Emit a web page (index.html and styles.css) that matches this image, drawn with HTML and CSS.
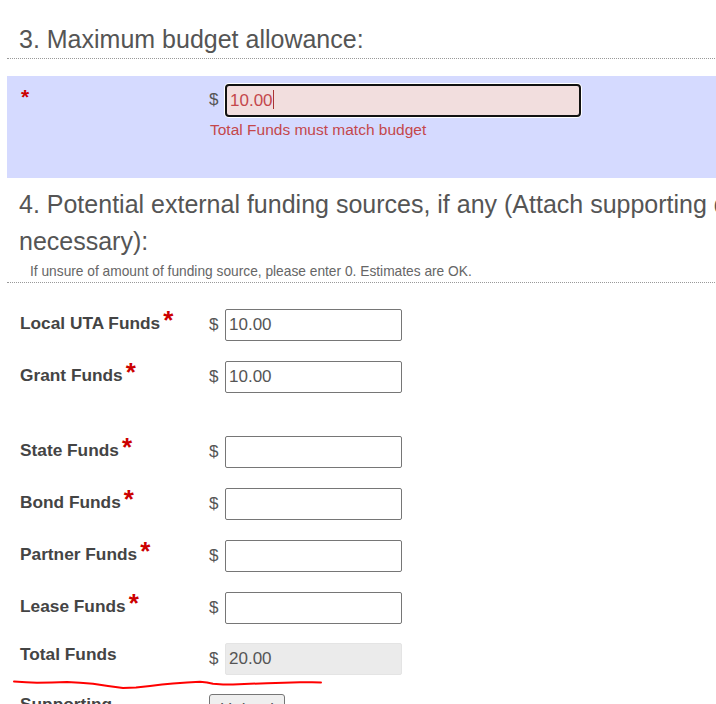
FILE: index.html
```html
<!DOCTYPE html>
<html lang="en">
<head>
<meta charset="utf-8">
<title>Budget</title>
<link rel="stylesheet" href="styles.css">
</head>
<body>
<div class="page">
  <h2 class="section-title">3. Maximum budget allowance:</h2>

  <div class="budget-panel">
    <div class="row">
      <div class="label label-req"><span class="req-big">*</span></div>
      <span class="currency">$</span>
      <div class="field-wrap">
        <input class="amount amount-wide is-invalid" type="text" value="10.00">
        <span class="caret"></span>
      </div>
      <div class="error-msg">Total Funds must match budget</div>
    </div>
  </div>

  <div class="section-head">
    <h2 class="section-title plain">4. Potential external funding sources, if any (Attach supporting documentation if<br>necessary):</h2>
    <p class="note">If unsure of amount of funding source, please enter 0. Estimates are OK.</p>
  </div>

  <div class="fund-rows">
    <div class="row">
      <label class="label">Local UTA Funds<span class="req">*</span></label>
      <span class="currency">$</span>
      <input class="amount" type="text" value="10.00">
    </div>
    <div class="row">
      <label class="label">Grant Funds<span class="req">*</span></label>
      <span class="currency">$</span>
      <input class="amount" type="text" value="10.00">
    </div>
    <div class="row group-start">
      <label class="label">State Funds<span class="req">*</span></label>
      <span class="currency">$</span>
      <input class="amount" type="text" value="">
    </div>
    <div class="row">
      <label class="label">Bond Funds<span class="req">*</span></label>
      <span class="currency">$</span>
      <input class="amount" type="text" value="">
    </div>
    <div class="row">
      <label class="label">Partner Funds<span class="req">*</span></label>
      <span class="currency">$</span>
      <input class="amount" type="text" value="">
    </div>
    <div class="row tight">
      <label class="label">Lease Funds<span class="req">*</span></label>
      <span class="currency">$</span>
      <input class="amount" type="text" value="">
    </div>
    <div class="row tight">
      <label class="label label-total">Total Funds</label>
      <span class="currency">$</span>
      <input class="amount amount-total" type="text" value="20.00" readonly>
    </div>
    <div class="row">
      <label class="label label-upload">Supporting Documentation</label>
      <button class="upload-btn" type="button">Upload</button>
    </div>
  </div>

  <svg class="squiggle" width="330" height="16" viewBox="0 0 330 16">
    <polyline points="14,5.5 26,6.2 37,6.8 52,6.4 67,6 80,6.8 93,7.8 108,10 123,12 136,11.5 150,10 162,8.5 173,7.4 187,6.4 200,5.8 207,6.5 213,7.8 223,8.4 233,8.4 250,7.8 267,7.3 284,6.8 300,6.3 312,6.2 321,6.4" fill="none" stroke="#f00" stroke-width="2" stroke-linecap="round" stroke-linejoin="round"/>
  </svg>
</div>
</body>
</html>
```

FILE: styles.css
```css
html, body {
  margin: 0;
  padding: 0;
  overflow: hidden;
  background: #fff;
}

body {
  font-family: "Liberation Sans", Arial, sans-serif;
  color: #444;
}

.page {
  position: relative;
  width: 1200px;
  padding: 21px 0 0 7px;
}

.section-title {
  margin: 0;
  padding-left: 12px;
  font-size: 25px;
  font-weight: normal;
  line-height: 37px;
  color: #555;
  white-space: nowrap;
  border-bottom: 1px dotted #999;
}

.section-title.plain {
  border-bottom: none;
}

.budget-panel {
  margin-top: 17px;
  background: #d5daff;
  padding: 8px 0 39px;
}

.row {
  display: grid;
  grid-template-columns: 202px 16px auto;
  align-items: start;
  margin-bottom: 20px;
}

.budget-panel .row {
  margin-bottom: 0;
}

.row.group-start {
  margin-top: 43px;
}

.row.tight {
  margin-bottom: 19px;
}

.label {
  padding-left: 13px;
  font-size: 17.3px;
  font-weight: bold;
  line-height: 29px;
  color: #444;
}

.label-req {
  padding-left: 14px;
}

.label-total {
  line-height: 23px;
}

.label-upload {
  line-height: 20px;
}

.req {
  color: #c00;
  font-size: 26px;
  line-height: 0;
  margin-left: 3px;
}

.req-big {
  color: #c00;
  font-size: 21px;
  line-height: 24px;
  font-weight: bold;
}

.currency {
  font-size: 17px;
  line-height: 32px;
  color: #555;
}

.field-wrap {
  position: relative;
}

.amount {
  box-sizing: border-box;
  display: block;
  width: 177px;
  height: 32px;
  margin: 0;
  padding: 0 3px;
  border: 1px solid #767676;
  border-radius: 2px;
  background: #fff;
  font-family: "Liberation Sans", Arial, sans-serif;
  font-size: 17px;
  color: #555;
  outline: none;
}

.amount-wide {
  width: 356px;
  height: 33px;
  border: 2px solid #111;
  border-radius: 4px;
  box-shadow: 0 0 0 1px #fff;
}

.is-invalid {
  background: #f2dede;
  color: #c4474b;
}

.amount-total {
  background: #ebebeb;
  border-color: #e4e4e4;
}

.caret {
  position: absolute;
  left: 48px;
  top: 6px;
  width: 1px;
  height: 19px;
  background: #a33;
}

.error-msg {
  grid-column: 2 / 4;
  margin-top: 4px;
  padding-left: 1px;
  font-size: 15.5px;
  line-height: 18px;
  color: #c4474b;
}

.section-head {
  margin-top: 8px;
  border-bottom: 1px dotted #999;
}

.note {
  margin: 2px 0 0;
  padding-left: 23px;
  font-size: 13.75px;
  line-height: 20px;
  color: #666;
}

.fund-rows {
  padding-top: 26px;
}

.upload-btn {
  grid-column: 2 / 4;
  justify-self: start;
  width: 76px;
  height: 32px;
  margin: 0;
  border: 1px solid #767676;
  border-radius: 3px;
  background: #efefef;
  font-family: "Liberation Sans", Arial, sans-serif;
  font-size: 17px;
  color: #555;
}

.squiggle {
  position: absolute;
  left: 0;
  top: 676px;
}
```
